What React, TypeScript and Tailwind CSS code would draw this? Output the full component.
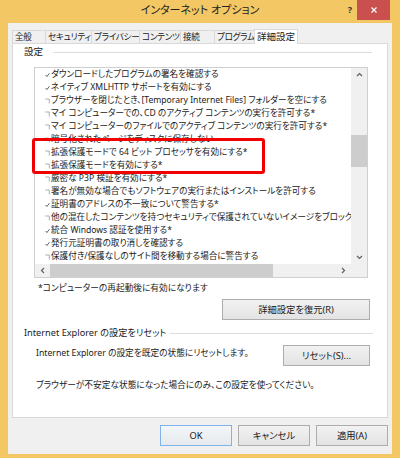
import React from "react";

const FONT = { fontFamily: '"Noto Sans", "Noto Sans CJK JP", sans-serif' };

type Row = { t: string; c: boolean };
const rows: Row[] = [
  { t: "ダウンロードしたプログラムの署名を確認する", c: true },
  { t: "ネイティブ XMLHTTP サポートを有効にする", c: true },
  { t: "ブラウザーを閉じたとき、[Temporary Internet Files] フォルダーを空にする", c: false },
  { t: "マイ コンピューターでの、CD のアクティブ コンテンツの実行を許可する*", c: false },
  { t: "マイ コンピューターのファイルでのアクティブ コンテンツの実行を許可する*", c: false },
  { t: "暗号化されたページをディスクに保存しない", c: false },
  { t: "拡張保護モードで 64 ビット プロセッサを有効にする*", c: false },
  { t: "拡張保護モードを有効にする*", c: false },
  { t: "厳密な P3P 検証を有効にする*", c: false },
  { t: "署名が無効な場合でもソフトウェアの実行またはインストールを許可する", c: false },
  { t: "証明書のアドレスの不一致について警告する*", c: true },
  { t: "他の混在したコンテンツを持つセキュリティで保護されていないイメージをブロックする", c: false },
  { t: "統合 Windows 認証を使用する*", c: true },
  { t: "発行元証明書の取り消しを確認する", c: true },
  { t: "保護付き/保護なしのサイト間を移動する場合に警告する", c: false },
  { t: "プロキシ接続経由で HTTP1.1 を使用する", c: false },
];

function Check({ on }: { on: boolean }) {
  return (
    <svg width="5" height="6" viewBox="0 0 5 6" className="shrink-0">
      {on ? (
        <path d="M0.6 3 L1.9 4.6 L4.4 1.2" stroke="#555" strokeWidth="0.9" fill="none" />
      ) : (
        <path d="M0.3 1 H4.3 V5.5" stroke="#9a9a9a" strokeWidth="0.8" fill="none" />
      )}
    </svg>
  );
}

const tabs = [
  { l: "全般", w: "w-[34px]" },
  { l: "セキュリティ", w: "w-[47px]" },
  { l: "プライバシー", w: "w-[49px]" },
  { l: "コンテンツ", w: "w-[42px]" },
  { l: "接続", w: "w-[35px]" },
  { l: "プログラム", w: "w-[41px]" },
];

function Btn({ children, cls }: { children: React.ReactNode; cls: string }) {
  return (
    <div
      className={`h-[21px] flex items-center justify-center border border-[#adadad] bg-gradient-to-b from-[#f2f2f2] to-[#e3e3e3] text-[9.3px] text-[#1a1a1a] ${cls}`}
    >
      {children}
    </div>
  );
}

export default function App() {
  return (
    <div
      className="w-[400px] h-[458px] bg-[#f2c764] flex flex-col px-[8px] pb-[4px] overflow-hidden [font-feature-settings:'palt']"
      style={FONT}
    >
      {/* title bar */}
      <div className="h-[23px] flex items-start relative shrink-0">
        <div className="absolute left-[-8px] right-[-8px] top-0 h-[23px] flex items-center justify-center text-[11px] text-[#222] pb-[2px]">
          インターネット オプション
        </div>
        <div className="ml-auto mr-[2px] flex items-start relative">
          <div className="w-[10px] h-[19px] flex items-center justify-center text-[9px] font-bold text-[#333] mr-[2px]">?</div>
          <div className="w-[33px] h-[20px] bg-[#c9504f] flex items-center justify-center">
            <svg width="6" height="6" viewBox="0 0 6 6">
              <path d="M0.5 0.5 L5.5 5.5 M5.5 0.5 L0.5 5.5" stroke="#fff" strokeWidth="1.2" />
            </svg>
          </div>
        </div>
      </div>

      {/* body */}
      <div className="flex-1 bg-[#f0f0f0] flex flex-col px-[4px] pt-[5px]">
        {/* tabs */}
        <div className="flex items-end h-[15px] text-[8.6px] tracking-[-0.3px] text-[#1a1a1a]">
          {tabs.map((t) => (
            <div
              key={t.l}
              className={`${t.w} h-[13px] border border-b-0 border-[#d9d9d9] -ml-px first:ml-0 bg-[#f0f0f0] flex items-center pl-[2px] whitespace-nowrap leading-none`}
            >
              {t.l}
            </div>
          ))}
          <div className="w-[44px] h-[15px] border border-b-0 border-[#d9d9d9] -ml-px bg-white flex items-center pl-[2px] whitespace-nowrap leading-none relative z-10 mb-[-1px] pb-[1px] text-[9.5px] tracking-normal">
            詳細設定
          </div>
        </div>

        {/* panel */}
        <div className="h-[375px] bg-white border border-[#d9d9d9] flex flex-col text-[8.7px] text-[#1a1a1a] leading-none">
          <div className="h-[12px] mt-[2px] flex items-center pl-[11px] pr-[15px] text-[9.5px]">
            <span>設定</span>
            <div className="flex-1 h-px bg-[#dcdcdc] ml-[10px]" />
          </div>

          {/* list box */}
          <div className="relative ml-[21px] mt-[9px] w-[334px] h-[211px] border border-[#cfcfcf] flex flex-col">
            <div className="flex flex-1 min-h-0">
              <div className="flex-1 overflow-hidden flex flex-col">
                {rows.map((r) => (
                  <div key={r.t} className="h-[13px] shrink-0 flex items-center pl-[10px] gap-[1px] whitespace-nowrap">
                    <Check on={r.c} />
                    <span className="text-[8.6px]">{r.t}</span>
                  </div>
                ))}
              </div>
              {/* vertical scrollbar */}
              <div className="w-[16px] bg-[#f0f0f0] flex flex-col items-center">
                <div className="h-[13px] flex items-center justify-center">
                  <svg width="7" height="5" viewBox="0 0 7 5">
                    <path d="M1 4 L3.5 1.5 L6 4" stroke="#606060" strokeWidth="1.2" fill="none" />
                  </svg>
                </div>
                <div className="h-[54px]" />
                <div className="w-[16px] h-[32px] bg-[#cdcdcd]" />
                <div className="flex-1" />
                <div className="h-[13px] flex items-center justify-center">
                  <svg width="7" height="5" viewBox="0 0 7 5">
                    <path d="M1 1 L3.5 3.5 L6 1" stroke="#606060" strokeWidth="1.2" fill="none" />
                  </svg>
                </div>
              </div>
            </div>
            {/* horizontal scrollbar */}
            <div className="h-[13px] flex shrink-0">
              <div className="flex-1 bg-[#f0f0f0] flex items-center">
                <div className="w-[15px] flex items-center justify-center">
                  <svg width="5" height="7" viewBox="0 0 5 7">
                    <path d="M4 1 L1.5 3.5 L4 6" stroke="#606060" strokeWidth="1.2" fill="none" />
                  </svg>
                </div>
                <div className="w-[223px] h-[13px] bg-[#cdcdcd]" />
                <div className="flex-1" />
                <div className="w-[15px] flex items-center justify-center">
                  <svg width="5" height="7" viewBox="0 0 5 7">
                    <path d="M1 1 L3.5 3.5 L1 6" stroke="#606060" strokeWidth="1.2" fill="none" />
                  </svg>
                </div>
              </div>
              <div className="w-[16px] bg-[#f0f0f0]" />
            </div>

            {/* red annotation box */}
            <div className="absolute left-[-3px] top-[70px] w-[233px] h-[36px] border-[3px] border-[#f00000] rounded-[3px] pointer-events-none" />
          </div>

          <div className="ml-[25px] mt-[4px] h-[12px] flex items-center">*コンピューターの再起動後に有効になります</div>

          <Btn cls="ml-[209px] mt-[5px] w-[148px]">詳細設定を復元(R)</Btn>

          <div className="h-[12px] mt-[7px] flex items-center pl-[11px] pr-[14px] whitespace-nowrap text-[9.2px]">
            <span>Internet Explorer の設定をリセット</span>
            <div className="flex-1 h-px bg-[#dcdcdc] ml-[4px]" />
          </div>

          <div className="h-[21px] mt-[6px] flex items-center pl-[23px] pr-[17px]">
            <span className="pb-[5px]">Internet Explorer の設定を既定の状態にリセットします。</span>
            <Btn cls="ml-auto w-[87px]">リセット(S)...</Btn>
          </div>

          <div className="ml-[23px] mt-[13px] h-[12px] flex items-center">
            ブラウザーが不安定な状態になった場合にのみ、この設定を使ってください。
          </div>
        </div>

        {/* bottom buttons */}
        <div className="flex justify-end mt-[7px] gap-[6px] pr-[0px]">
          <div className="w-[72px] h-[21px] flex items-center justify-center border border-[#7eb4ea] bg-gradient-to-b from-[#f4f6f8] to-[#e6eaee] text-[9.3px] text-[#1a1a1a]">
            OK
          </div>
          <Btn cls="w-[72px]">キャンセル</Btn>
          <Btn cls="w-[72px]">適用(A)</Btn>
        </div>
      </div>
    </div>
  );
}
